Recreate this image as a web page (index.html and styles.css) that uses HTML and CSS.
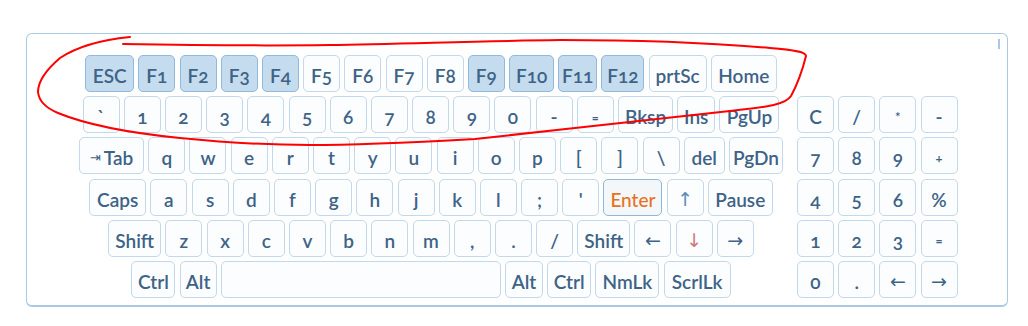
FILE: index.html
```html
<!DOCTYPE html>
<html lang="en">
<head>
<meta charset="UTF-8" />
<meta name="viewport" content="width=device-width, initial-scale=1.0">
<title>Keyboard</title>
<link rel="stylesheet" href="styles.css">
</head>
<body>
<div class="keyboard">
  <div class="main">
    <div class="row">
      <span class="key on w49">ESC</span>
      <span class="key on">F1</span>
      <span class="key on">F2</span>
      <span class="key on">F3</span>
      <span class="key on">F4</span>
      <span class="key">F5</span>
      <span class="key">F6</span>
      <span class="key">F7</span>
      <span class="key">F8</span>
      <span class="key on">F9</span>
      <span class="key on w45">F10</span>
      <span class="key on w39">F11</span>
      <span class="key on w43">F12</span>
      <span class="key w58">prtSc</span>
      <span class="key w66">Home</span>
    </div>
    <div class="row">
      <span class="key">`</span>
      <span class="key">1</span>
      <span class="key">2</span>
      <span class="key">3</span>
      <span class="key">4</span>
      <span class="key">5</span>
      <span class="key">6</span>
      <span class="key">7</span>
      <span class="key">8</span>
      <span class="key">9</span>
      <span class="key">0</span>
      <span class="key">-</span>
      <span class="key small">=</span>
      <span class="key w55">Bksp</span>
      <span class="key w38">Ins</span>
      <span class="key w60">PgUp</span>
    </div>
    <div class="row">
      <span class="key w65"><span class="tab-ico">⇥</span>Tab</span>
      <span class="key">q</span>
      <span class="key">w</span>
      <span class="key">e</span>
      <span class="key">r</span>
      <span class="key">t</span>
      <span class="key">y</span>
      <span class="key">u</span>
      <span class="key">i</span>
      <span class="key">o</span>
      <span class="key">p</span>
      <span class="key">[</span>
      <span class="key">]</span>
      <span class="key">\</span>
      <span class="key w41">del</span>
      <span class="key w54">PgDn</span>
    </div>
    <div class="row">
      <span class="key w57">Caps</span>
      <span class="key">a</span>
      <span class="key">s</span>
      <span class="key">d</span>
      <span class="key">f</span>
      <span class="key">g</span>
      <span class="key">h</span>
      <span class="key">j</span>
      <span class="key">k</span>
      <span class="key">l</span>
      <span class="key">;</span>
      <span class="key">'</span>
      <span class="key enter w59">Enter</span>
      <span class="key arrow up">↑</span>
      <span class="key w65">Pause</span>
    </div>
    <div class="row">
      <span class="key w53">Shift</span>
      <span class="key">z</span>
      <span class="key">x</span>
      <span class="key">c</span>
      <span class="key">v</span>
      <span class="key">b</span>
      <span class="key">n</span>
      <span class="key">m</span>
      <span class="key">,</span>
      <span class="key">.</span>
      <span class="key">/</span>
      <span class="key w53">Shift</span>
      <span class="key arrow">←</span>
      <span class="key arrow down">↓</span>
      <span class="key arrow">→</span>
    </div>
    <div class="row">
      <span class="key w44">Ctrl</span>
      <span class="key">Alt</span>
      <span class="key space"></span>
      <span class="key w38">Alt</span>
      <span class="key w44">Ctrl</span>
      <span class="key w64">NmLk</span>
      <span class="key w67">ScrlLk</span>
    </div>
  </div>
  <div class="numpad">
    <span class="key">C</span>
    <span class="key">/</span>
    <span class="key small">*</span>
    <span class="key">-</span>
    <span class="key">7</span>
    <span class="key">8</span>
    <span class="key">9</span>
    <span class="key small">+</span>
    <span class="key">4</span>
    <span class="key">5</span>
    <span class="key">6</span>
    <span class="key">%</span>
    <span class="key">1</span>
    <span class="key">2</span>
    <span class="key">3</span>
    <span class="key small">=</span>
    <span class="key">0</span>
    <span class="key">.</span>
    <span class="key arrow">←</span>
    <span class="key arrow">→</span>
  </div>
  <span class="scroll-mark"></span>
</div>

<!-- red marker ring drawn over the function row -->
<svg class="scribble" width="1028" height="326" viewBox="0 0 1028 326">
  <path d="M130 37 C100 40 75 48 60 58 C46 70 38 82 38 92 C39 102 46 108 58 113 C80 122 120 132 180 138 C230 143 270 145 310 145 C360 145 420 142 475 139 C560 130 660 118 730 111 C770 107 786 104 791 96 C797 85 803 68 806 56 C806 52 795 50 770 48 C700 42 620 40 560 40 C480 41 400 44 330 45 C250 46 180 45 123 44"
        fill="none" stroke="#f00" stroke-width="2" stroke-linecap="round"/>
</svg>
</body>
</html>
```

FILE: styles.css
```css
body {
  margin: 0;
  background: #fff;
  font-family: 'Lato', 'Liberation Sans', sans-serif;
  position: relative;
}

.keyboard {
  position: relative;
  box-sizing: border-box;
  width: 982px;
  height: 274px;
  margin: 33px 0 0 26px;
  padding: 21px 0 0 48px;
  border: 1px solid #a9c9e3;
  border-bottom-width: 2px;
  border-radius: 6px;
  display: flex;
  gap: 10px;
  align-items: flex-start;
}

.main {
  width: 712px;
  display: flex;
  flex-direction: column;
  gap: 4.2px;
}

.row {
  display: flex;
  justify-content: center;
  gap: 4.2px;
}

.numpad {
  margin-top: 41.2px;
  display: grid;
  grid-template-columns: repeat(4, 37px);
  grid-auto-rows: 37px;
  gap: 4.2px;
}

.key {
  box-sizing: border-box;
  width: 37px;
  height: 37px;
  flex-shrink: 0;
  display: flex;
  align-items: center;
  justify-content: center;
  padding-top: 4px;
  border: 1px solid #c2d8ec;
  border-radius: 5px;
  background: #fcfdfe;
  color: #3d6387;
  font-size: 19px;
  font-weight: 600;
  font-variant-numeric: oldstyle-nums;
  white-space: nowrap;
}

.key.on {
  background: #c5dbee;
  border-color: #8fb9de;
}

.key.small {
  font-size: 13px;
}

.key.enter {
  color: #e6721e;
  background: #f3f7fa;
  border-color: #8cb8de;
  font-weight: 500;
}

.key.arrow {
  font-family: 'DejaVu Sans', sans-serif;
  font-weight: 400;
  font-size: 19px;
}

.key.up {
  color: #5d8cb6;
}

.key.down {
  color: #cf7b7b;
}

.tab-ico {
  font-family: 'DejaVu Sans', sans-serif;
  font-size: 13px;
  font-weight: 400;
  margin-right: 3px;
}

.w38 { width: 38px; }
.w39 { width: 39px; }
.w41 { width: 41px; }
.w43 { width: 43px; }
.w44 { width: 44px; }
.w45 { width: 45px; }
.w49 { width: 49px; }
.w53 { width: 53px; }
.w54 { width: 54px; }
.w55 { width: 55px; }
.w57 { width: 57px; }
.w58 { width: 58px; }
.w59 { width: 59px; }
.w60 { width: 60px; }
.w64 { width: 64px; }
.w65 { width: 65px; }
.w66 { width: 66px; }
.w67 { width: 67px; }
.space { width: 280px; }

.scroll-mark {
  position: absolute;
  top: 5px;
  right: 7px;
  width: 2px;
  height: 10px;
  background: #a9c9e3;
}

.scribble {
  position: absolute;
  top: 0;
  left: 0;
  pointer-events: none;
}
```
